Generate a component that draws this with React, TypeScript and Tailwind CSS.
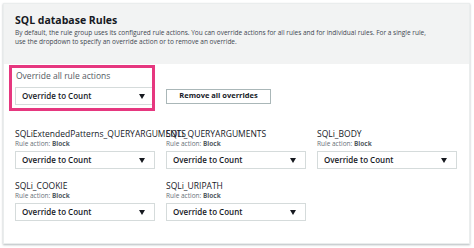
import React from 'react';

const rules = [
  'SQLiExtendedPatterns_QUERYARGUMENTS',
  'SQLi_QUERYARGUMENTS',
  'SQLi_BODY',
  'SQLi_COOKIE',
  'SQLi_URIPATH',
];

const Caret = () => (
  <svg width="6" height="5" viewBox="0 0 6 5" className="shrink-0">
    <polygon points="0,0 6,0 3,5" fill="#16191f" />
  </svg>
);

const OverrideSelect = () => (
  <div className="flex h-[18px] w-[140px] items-center justify-between border border-[#d5dbdb] bg-white pl-[6px] pr-[9px]">
    <span className="text-[8px] font-semibold text-[#16191f]">Override to Count</span>
    <Caret />
  </div>
);

export default function App() {
  return (
    <div className="h-[248px] w-[474px] bg-white pb-[4px] pl-[3px] pr-[4px] pt-[3px] font-['Open_Sans',sans-serif]">
      <div className="flex h-full flex-col border border-[#eaeded] shadow-[0_1px_2px_rgba(0,28,36,0.3)]">
        <div className="h-[60px] bg-[#f2f3f3] px-[11px] pt-[9px]">
          <h2 className="text-[10.5px] font-bold leading-[14px] text-[#16191f]">SQL database Rules</h2>
          <p className="mt-[1px] text-[6.5px] leading-[9px] text-[#414750]">
            By default, the rule group uses its configured rule actions. You can override actions for all rules and for individual rules. For a single rule,
            <br />
            use the dropdown to specify an override action or to remove an override.
          </p>
        </div>
        <div className="flex-1 px-[11px] pt-[6px]">
          <div className="relative">
            <div className="pl-[1px] text-[8.5px] leading-[12px] text-[#545b64]">Override all rule actions</div>
            <div className="mt-[5px] flex items-center gap-[11px]">
              <OverrideSelect />
              <button
                type="button"
                className="h-[15px] w-[105px] border border-[#aab7b8] bg-white text-[7.5px] font-bold text-[#16191f]"
              >
                Remove all overrides
              </button>
            </div>
            <div className="pointer-events-none absolute left-[-6px] top-[-5px] h-[46px] w-[146px] border-[3px] border-[#e6377f]" />
          </div>
          <div className="mt-[23px] grid grid-cols-[140px_140px_140px] gap-x-[11px] gap-y-[11px]">
            {rules.map((r) => (
              <div key={r} className="flex flex-col">
                <div className="whitespace-nowrap text-[8.5px] leading-[11px] text-[#16191f]">{r}</div>
                <div className="text-[6.5px] leading-[9px] text-[#687078]">
                  Rule action: <span className="font-bold text-[#545b64]">Block</span>
                </div>
                <div className="mt-[3px]">
                  <OverrideSelect />
                </div>
              </div>
            ))}
          </div>
        </div>
      </div>
    </div>
  );
}
